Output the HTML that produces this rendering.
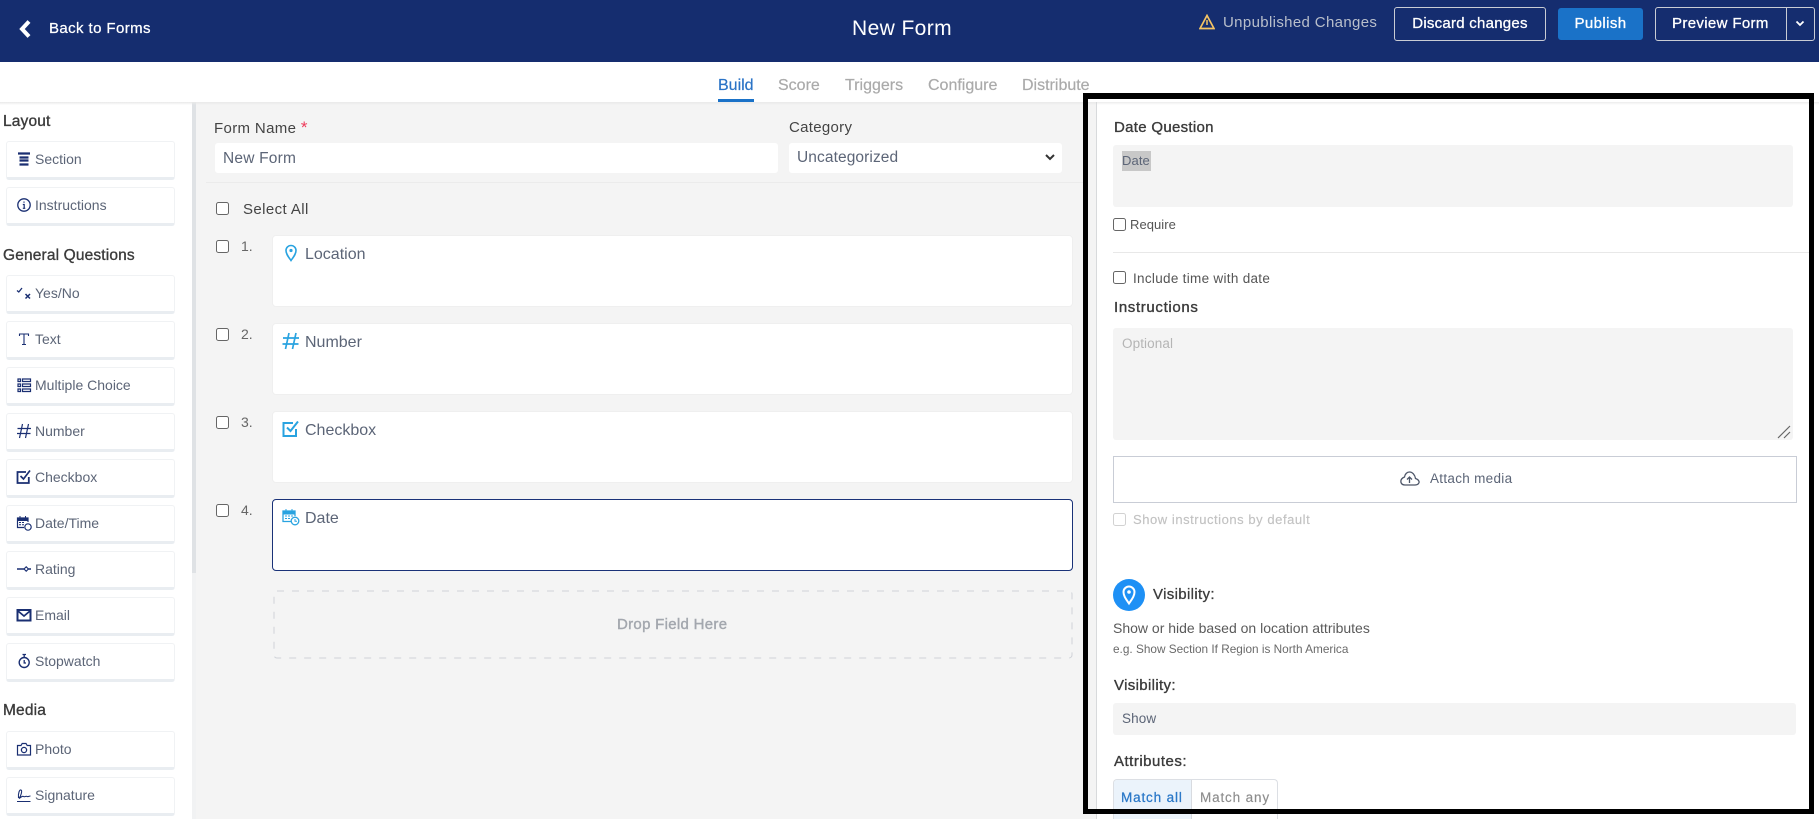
<!DOCTYPE html>
<html lang="en"><head><meta charset="utf-8"><title>New Form</title>
<style>
*{box-sizing:border-box}
html,body{margin:0;padding:0;width:1819px;height:819px;overflow:hidden}
body{background:#fff;font-family:"Liberation Sans",sans-serif;color:#3d3d3d}
#r{position:absolute;left:0;top:0;width:1819px;height:819px;overflow:hidden;background:#fff}
.a{position:absolute}
.t{position:absolute;line-height:20px;white-space:nowrap}
.it{position:absolute;left:6px;width:169px;height:39px;background:#fff;border:1px solid #f0f2f4;border-bottom:3px solid #e9edf1;border-radius:3px}
.it span{position:absolute;left:28px;top:7px;line-height:20px;font-size:14px;color:#5c6577;white-space:nowrap}
.it svg{position:absolute;left:9px;top:9px}
.h{font-size:15.5px;letter-spacing:.15px;color:#3b3b3b;-webkit-text-stroke:.35px #3b3b3b;left:3px}
.cb{position:absolute;width:13px;height:13px;border:1px solid #666;border-radius:2.5px;background:#fff}
.card{position:absolute;left:272px;width:801px;height:72px;background:#fff;border:1px solid #efefef;border-radius:4px}
.ct{font-size:16px;color:#5c6577;left:305px}
.n{font-size:14px;color:#666;left:241px}
.tab{font-size:16px;color:#aaa;top:76px;-webkit-text-stroke:.2px #aaa}
.btn{position:absolute;border:1px solid #c9ccd4;border-radius:3px;color:#fff;font-size:15px;text-align:center;-webkit-text-stroke:.3px #fff}
.lb{font-size:15px;color:#3b3b3b;-webkit-text-stroke:.35px #3b3b3b;left:1114px}
.box{position:absolute;background:#f4f4f4;border-radius:3px}
svg{display:block}
</style></head><body><div id="r">

<!-- header -->
<div class="a" style="left:0;top:0;width:1819px;height:62px;background:#152d6f"></div>
<svg class="a" style="left:17px;top:19px" width="16" height="20" viewBox="0 0 16 20"><path d="M12 2.500 L5 10 L12 17.500" fill="none" stroke="#fff" stroke-width="4"/></svg>
<div class="t" style="left:49px;top:19px;font-size:15px;letter-spacing:.4px;color:#fff;-webkit-text-stroke:.25px #fff">Back to Forms</div>
<div class="t" style="left:852px;top:18px;font-size:21px;line-height:22px;color:#fff;letter-spacing:.4px">New Form</div>
<svg class="a" style="left:1199px;top:14px" width="16" height="16" viewBox="0 0 16 16"><path d="M8 1.500 L15 14.500 H1 Z" fill="none" stroke="#f5c464" stroke-width="1.700"/><path d="M8 6v5" stroke="#f5c464" stroke-width="1.500"/></svg>
<div class="t" style="left:1223px;top:13px;font-size:15px;letter-spacing:.35px;color:#b9bfcb">Unpublished Changes</div>
<div class="btn" style="left:1394px;top:7px;width:152px;height:34px;line-height:32px;letter-spacing:.25px">Discard changes</div>
<div class="btn" style="left:1558px;top:8px;width:85px;height:32px;line-height:30px;background:#1a72c8;border-color:#1a72c8;letter-spacing:.4px">Publish</div>
<div class="btn" style="left:1655px;top:7px;width:160px;height:34px;line-height:32px;text-align:left;padding-left:16px;letter-spacing:.35px">Preview Form</div>
<div class="a" style="left:1786px;top:7px;width:1px;height:34px;background:#c9ccd4"></div>
<svg class="a" style="left:1795px;top:20px" width="10" height="8" viewBox="0 0 10 8"><path d="M1.500 1.500 L5 5 L8.500 1.500" fill="none" stroke="#fff" stroke-width="1.800"/></svg>

<!-- tabs -->
<div class="t tab" style="left:718px;color:#2a73c6;-webkit-text-stroke:.2px #2a73c6">Build</div>
<div class="t tab" style="left:778px">Score</div>
<div class="t tab" style="left:845px">Triggers</div>
<div class="t tab" style="left:928px">Configure</div>
<div class="t tab" style="left:1022px">Distribute</div>
<div class="a" style="left:718px;top:99px;width:36px;height:3px;background:#1a72c8"></div>

<!-- main -->
<div class="a" style="left:196px;top:102px;width:900px;height:717px;background:#f4f4f4"></div>
<div class="a" style="left:192px;top:102px;width:4px;height:717px;background:#f1f2f3"></div>
<div class="a" style="left:192px;top:102px;width:4px;height:471px;background:#dfe2e5"></div>
<div class="a" style="left:0;top:102px;width:1819px;height:3px;background:linear-gradient(#e9e9e9,rgba(240,240,240,0))"></div>

<div class="t" style="left:214px;top:118px;font-size:15px;letter-spacing:.35px;color:#444">Form Name <span style="color:#ee3a5a;font-size:17px">*</span></div>
<div class="a" style="left:215px;top:143px;width:563px;height:30px;background:#fff;border-radius:3px"></div>
<div class="t" style="left:223px;top:149px;font-size:15.500px;letter-spacing:.2px;color:#5c6577">New Form</div>
<div class="t" style="left:789px;top:118px;font-size:15px;letter-spacing:.3px;color:#444">Category</div>
<div class="a" style="left:789px;top:143px;width:273px;height:30px;background:#fff;border-radius:3px"></div>
<div class="t" style="left:797px;top:148px;font-size:15.500px;letter-spacing:.1px;color:#5c6577">Uncategorized</div>
<svg class="a" style="left:1044px;top:153px" width="12" height="9" viewBox="0 0 12 9"><path d="M2 2 L6 6 L10 2" fill="none" stroke="#333" stroke-width="2"/></svg>
<div class="a" style="left:206px;top:182px;width:878px;height:1px;background:#ebebeb"></div>

<div class="cb" style="left:216px;top:202px"></div>
<div class="t" style="left:243px;top:200px;font-size:15px;letter-spacing:.4px;color:#444">Select All</div>

<div class="cb" style="left:216px;top:240px"></div><div class="t n" style="top:236px">1.</div>
<div class="cb" style="left:216px;top:328px"></div><div class="t n" style="top:324px">2.</div>
<div class="cb" style="left:216px;top:416px"></div><div class="t n" style="top:412px">3.</div>
<div class="cb" style="left:216px;top:504px"></div><div class="t n" style="top:500px">4.</div>

<div class="card" style="top:235px"></div>
<div class="card" style="top:323px"></div>
<div class="card" style="top:411px"></div>
<div class="card" style="top:499px;height:72px;border:1.500px solid #1a3278"></div>

<svg class="a" style="left:284px;top:244px" width="14" height="18" viewBox="0 0 14 18"><path d="M7 16.500 C4.500 13 2 10 2 6.500 A5 5 0 0 1 12 6.500 C12 10 9.500 13 7 16.500Z" fill="none" stroke="#29a3e0" stroke-width="1.600"/><circle cx="7" cy="6.500" r="1.600" fill="#29a3e0"/></svg>
<div class="t ct" style="top:245px">Location</div>
<svg class="a" style="left:282px;top:332px" width="18" height="18" viewBox="0 0 18 18"><path d="M7 1 L3.500 17 M14 1 L10.500 17 M1 6 H17 M0.500 12 H16.500" fill="none" stroke="#29a3e0" stroke-width="1.700"/></svg>
<div class="t ct" style="top:333px">Number</div>
<svg class="a" style="left:282px;top:420px" width="18" height="18" viewBox="0 0 18 18"><path d="M14 9 V16 H1.500 V3 H11" fill="none" stroke="#29a3e0" stroke-width="2"/><path d="M5 7.500 L8.500 11 L16 1.500" fill="none" stroke="#29a3e0" stroke-width="2"/></svg>
<div class="t ct" style="top:421px">Checkbox</div>
<svg class="a" style="left:282px;top:508px" width="18" height="18" viewBox="0 0 18 18"><path d="M9 13.500 H1 V3 H13 V8" fill="none" stroke="#29a3e0" stroke-width="1.300"/><path d="M1 3 H13 V6 H1Z M4 1 V4 M10 1 V4" fill="#29a3e0" stroke="#29a3e0" stroke-width="1"/><path d="M3 8 h2 M6 8 h2 M9 8 h2 M3 10.500 h2 M6 10.500 h2" stroke="#29a3e0" stroke-width="1.100"/><circle cx="13" cy="13" r="3.800" fill="#fff" stroke="#29a3e0" stroke-width="1.300"/><path d="M13 11 V13.300 H15" fill="none" stroke="#29a3e0"/></svg>
<div class="t ct" style="top:509px">Date</div>

<svg class="a" style="left:273px;top:590px" width="800" height="69" viewBox="0 0 800 69"><rect x="1" y="1" width="798" height="67" rx="3" fill="none" stroke="#cfd2d8" stroke-width="1" stroke-dasharray="7 8"/></svg>
<div class="t" style="left:617px;top:615px;font-size:15px;letter-spacing:.3px;color:#a3a7ae;-webkit-text-stroke:.4px #a3a7ae">Drop Field Here</div>

<!-- sidebar -->
<div class="t h" style="top:112px">Layout</div>
<div class="t h" style="top:246px">General Questions</div>
<div class="t h" style="top:701px">Media</div>

<div class="it" style="top:141px"><svg width="16" height="16" viewBox="0 0 16 16"><path d="M2 2.500 H14 M3.500 6.500 H12.500 M3.500 9.500 H12.500 M3.500 13.500 H12.500" fill="none" stroke="#1a2f72" stroke-width="2.200"/></svg><span>Section</span></div>
<div class="it" style="top:187px"><svg width="16" height="16" viewBox="0 0 16 16"><circle cx="8" cy="8" r="6.200" fill="none" stroke="#1a2f72" stroke-width="1.300"/><path d="M8 4.500 V5.800 M6.800 7.500 H8.200 V11.200 M6.800 11.300 H9.300" fill="none" stroke="#1a2f72" stroke-width="1.200"/></svg><span>Instructions</span></div>

<div class="it" style="top:275px"><svg width="16" height="16" viewBox="0 0 16 16"><path d="M1 5.500 L2.800 7 L6 3" fill="none" stroke="#1a2f72" stroke-width="1.300"/><path d="M9.500 9 L14 13.500 M14 9 L9.500 13.500" fill="none" stroke="#1a2f72" stroke-width="1.500"/></svg><span>Yes/No</span></div>
<div class="it" style="top:321px"><svg width="16" height="16" viewBox="0 0 16 16"><path d="M3.500 5 V3 H12.500 V5 M8 3 V13.500 M6 13.500 H10" fill="none" stroke="#1a2f72" stroke-width="1.100"/></svg><span>Text</span></div>
<div class="it" style="top:367px"><svg width="16" height="16" viewBox="0 0 16 16"><path d="M2 2h2.500v2.500h-2.500z M2 7h2.500v2.500h-2.500z M2 12h2.500v2.500h-2.500z M6.500 2 h8 v2.500 h-8z M6.500 7 h8 v2.500 h-8z M6.500 12 h8 v2.500 h-8z" fill="none" stroke="#1a2f72" stroke-width="1.200"/></svg><span>Multiple Choice</span></div>
<div class="it" style="top:413px"><svg width="16" height="16" viewBox="0 0 16 16"><path d="M6.500 1 L3.500 15 M12.500 1 L9.500 15 M1.500 5.500 H15 M1 10.500 H14.500" fill="none" stroke="#1a2f72" stroke-width="1.200"/></svg><span>Number</span></div>
<div class="it" style="top:459px"><svg width="16" height="16" viewBox="0 0 16 16"><path d="M12.800 8 V14 H1.500 V3 H10" fill="none" stroke="#1a2f72" stroke-width="1.800"/><path d="M4.500 7 L7.500 10 L14 1.500" fill="none" stroke="#1a2f72" stroke-width="1.700"/></svg><span>Checkbox</span></div>
<div class="it" style="top:505px"><svg width="16" height="16" viewBox="0 0 16 16"><path d="M8 12.500 H1.500 V3 H12 V7" fill="none" stroke="#1a2f72" stroke-width="1.200"/><path d="M1.500 3 H12 V5.500 H1.500Z M4 1 V4 M9.500 1 V4" fill="#1a2f72" stroke="#1a2f72"/><path d="M3 7.500 h2 M6 7.500 h2 M3 9.800 h2 M6 9.800 h2" stroke="#1a2f72"/><circle cx="12" cy="12" r="3.200" fill="#fff" stroke="#1a2f72" stroke-width="1.200"/></svg><span>Date/Time</span></div>
<div class="it" style="top:551px"><svg width="16" height="16" viewBox="0 0 16 16"><path d="M1 8 H8 M12.500 8 H15" fill="none" stroke="#1a2f72" stroke-width="1.600"/><path d="M10.200 5.800 L12.400 8 L10.200 10.200 L8 8Z" fill="none" stroke="#1a2f72" stroke-width="1.100"/></svg><span>Rating</span></div>
<div class="it" style="top:597px"><svg width="16" height="16" viewBox="0 0 16 16"><path d="M1.500 3 H14.500 V13.500 H1.500Z" fill="none" stroke="#1a2f72" stroke-width="2"/><path d="M2 4 L8 9 L14 4" fill="none" stroke="#1a2f72" stroke-width="1.700"/></svg><span>Email</span></div>
<div class="it" style="top:643px"><svg width="16" height="16" viewBox="0 0 16 16"><circle cx="8.200" cy="9.500" r="5" fill="none" stroke="#1a2f72" stroke-width="1.400"/><path d="M6.500 1.500 H10 M8.200 1.500 V4.500 M8.200 7 V10 H10" fill="none" stroke="#1a2f72" stroke-width="1.300"/></svg><span>Stopwatch</span></div>
<div class="it" style="top:731px"><svg width="16" height="16" viewBox="0 0 16 16"><path d="M1.500 4.500 H5 L6.200 2.500 H10 L11.200 4.500 H14.500 V14 H1.500Z" fill="none" stroke="#1a2f72" stroke-width="1.200"/><circle cx="8" cy="9" r="2.600" fill="none" stroke="#1a2f72" stroke-width="1.300"/></svg><span>Photo</span></div>
<div class="it" style="top:777px"><svg width="16" height="16" viewBox="0 0 16 16"><path d="M1 14.500 H14.500" stroke="#1a2f72" stroke-width="1"/><path d="M2.500 11 C2 6 3.500 2.500 5 3 C6.500 3.500 5 9 3 11.500 C5 10.500 6 8.500 7.500 9.500 C8.500 10.500 10 8.500 11 9.500 C12 10 13 9 14.500 9" fill="none" stroke="#1a2f72" stroke-width="1.100"/></svg><span>Signature</span></div>

<!-- right panel -->
<div class="a" style="left:1096px;top:102px;width:723px;height:717px;background:#fff;border-left:1px solid #d8dadc"></div>
<div class="a" style="left:1097px;top:102px;width:722px;height:3px;background:linear-gradient(#ececec,rgba(255,255,255,0))"></div>
<div class="t lb" style="top:118px;letter-spacing:.3px">Date Question</div>
<div class="box" style="left:1113px;top:145px;width:680px;height:62px"></div>
<div class="a" style="left:1122px;top:151px;width:29px;height:20px;background:#c8c8c8"></div>
<div class="t" style="left:1122px;top:151px;font-size:13px;letter-spacing:.1px;color:#5c6577">Date</div>
<div class="cb" style="left:1113px;top:218px"></div>
<div class="t" style="left:1130px;top:215px;font-size:13px;letter-spacing:.05px;color:#555">Require</div>
<div class="a" style="left:1113px;top:252px;width:696px;height:1px;background:#e8e8e8"></div>
<div class="cb" style="left:1113px;top:271px"></div>
<div class="t" style="left:1133px;top:269px;font-size:13.500px;letter-spacing:.3px;color:#555">Include time with date</div>
<div class="t lb" style="top:298px;letter-spacing:.65px">Instructions</div>
<div class="box" style="left:1113px;top:328px;width:680px;height:112px"></div>
<div class="t" style="left:1122px;top:334px;font-size:13.500px;letter-spacing:.1px;color:#b5b5b5">Optional</div>
<svg class="a" style="left:1777px;top:425px" width="14" height="14" viewBox="0 0 14 14"><path d="M1 13 L13 1 M7 13 L13 7" stroke="#666" stroke-width="1.200" fill="none"/></svg>
<div class="a" style="left:1113px;top:456px;width:684px;height:47px;background:#fff;border:1px solid #c9cdd6"></div>
<svg class="a" style="left:1400px;top:470px" width="20" height="17" viewBox="0 0 20 17"><path d="M5 15 H15 C18 15 19.500 13 19 11.500 C18.500 9.500 17 9 15.500 8.500 C15 5 12.500 2 9.500 2 C7 2 5 4 4.500 7 C2 8 0.500 10 1 12.500 C1.500 14 3 15 5 15Z" fill="none" stroke="#4d5668" stroke-width="1.300"/><path d="M9.500 13 V7 M7 9.500 L9.500 7 L12 9.500" fill="none" stroke="#4d5668" stroke-width="1.300"/></svg>
<div class="t" style="left:1430px;top:469px;font-size:13.500px;letter-spacing:.3px;color:#5c6577">Attach media</div>
<div class="cb" style="left:1113px;top:513px;border-color:#d2d2d2"></div>
<div class="t" style="left:1133px;top:510px;font-size:13px;letter-spacing:.55px;color:#c2c2c2;-webkit-text-stroke:.15px #c2c2c2">Show instructions by default</div>

<div class="a" style="left:1113px;top:579px;width:32px;height:32px;border-radius:50%;background:#1e90f5"></div>
<svg class="a" style="left:1121px;top:584px" width="16" height="22" viewBox="0 0 16 22"><path d="M8 19.500 C5 15 2.500 12 2.500 8 A5.500 5.500 0 0 1 13.500 8 C13.500 12 11 15 8 19.500Z" fill="none" stroke="#fff" stroke-width="2"/><circle cx="8" cy="8" r="1.800" fill="#fff"/></svg>
<div class="t" style="left:1153px;top:585px;font-size:15px;letter-spacing:.35px;color:#3b3b3b;-webkit-text-stroke:.3px #3b3b3b">Visibility:</div>
<div class="t" style="left:1113px;top:618px;font-size:14px;color:#5a5a5a">Show or hide based on location attributes</div>
<div class="t" style="left:1113px;top:639px;font-size:11.800px;color:#6a6a6a">e.g. Show Section If Region is North America</div>
<div class="t lb" style="top:676px;letter-spacing:.35px">Visibility:</div>
<div class="box" style="left:1113px;top:703px;width:683px;height:32px"></div>
<div class="t" style="left:1122px;top:709px;font-size:13.500px;letter-spacing:.1px;color:#5c6577">Show</div>
<div class="t lb" style="top:752px;letter-spacing:.5px">Attributes:</div>
<div class="a" style="left:1113px;top:779px;width:165px;height:40px;border:1px solid #dcdfe4;border-bottom:0;border-radius:4px 4px 0 0;overflow:hidden;background:#fff"><div class="a" style="left:0;top:0;width:78px;height:40px;background:#ebf3fb;border-right:1px solid #d8dbe0"></div></div>
<div class="t" style="left:1121px;top:788px;font-size:13.500px;letter-spacing:.85px;color:#2a78c8;-webkit-text-stroke:.25px #2a78c8">Match all</div>
<div class="t" style="left:1200px;top:788px;font-size:13.500px;letter-spacing:.85px;color:#8d8d8d;-webkit-text-stroke:.15px #8d8d8d">Match any</div>

<!-- black frame -->
<div class="a" style="left:1083px;top:93px;width:731px;height:721px;border:5px solid #000;border-top-width:6px"></div>
</div></body></html>
